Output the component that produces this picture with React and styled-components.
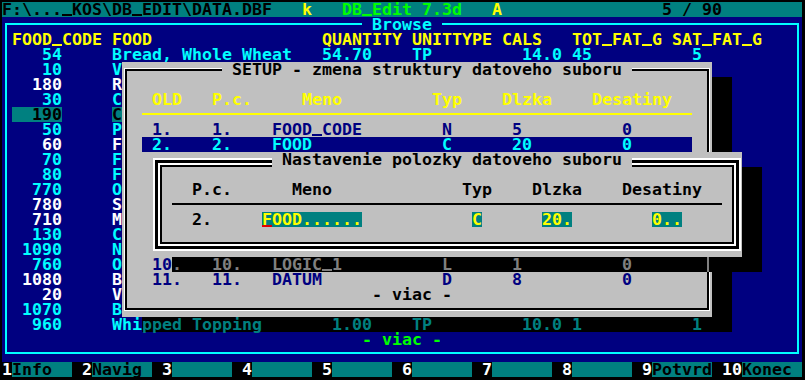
import React from 'react';
import styled, { createGlobalStyle } from 'styled-components';

// Windows console palette
const C = {
  black: '#000000',
  navy: '#000080',
  teal: '#008080',
  gray: '#c0c0c0',
  dim: '#808080',
  cyan: '#00ffff',
  yellow: '#ffff00',
  green: '#00ff00',
  white: '#ffffff',
};

const GlobalStyle = createGlobalStyle`
  html, body {
    margin: 0;
    padding: 0;
    background: #000;
  }
  body {
    width: 805px;
    height: 380px;
    overflow: hidden;
  }
`;

const Screen = styled.div`
  position: relative;
  width: 800px;
  height: 375px;
  margin: 2px 0 0 2px;
  font-family: "DejaVu Sans Mono", "Liberation Mono", monospace;
  font-weight: bold;
  font-size: 16.61px;
  line-height: 15px;
  color: ${C.gray};
`;

const Line = styled.div`
  position: relative;
  z-index: 1;
  display: flex;
  height: 15px;
  color: ${(p) => p.$fg || 'inherit'};
  background: ${(p) => p.$bg || 'transparent'};
`;

const Cell = styled.span`
  flex: none;
  width: ${(p) => p.$w * 10}px;
  height: 15px;
  white-space: pre;
  color: ${(p) => p.$fg || 'inherit'};
  background: ${(p) => p.$bg || 'transparent'};
  box-shadow: ${(p) => (p.$cursor ? 'inset 0 -2px 0 #e00000' : 'none')};
`;

// the font puts "_" below the 15px cell, so the bar is drawn at the cell bottom
const Under = styled.span`
  display: inline-block;
  width: 10px;
  height: 15px;
  vertical-align: top;
  -webkit-text-fill-color: transparent;
  background: linear-gradient(currentColor, currentColor) 0 12px / 100% 2px no-repeat;
`;

// horizontal single line drawn through the middle of the cells
const Rule = styled.span`
  flex: none;
  width: ${(p) => p.$w * 10}px;
  height: 15px;
  background: linear-gradient(${(p) => p.$color}, ${(p) => p.$color}) 0 6px / 100% 2px no-repeat;
`;

// frame line seen through a shadow
const Ghost = styled.span`
  flex: none;
  width: ${(p) => p.$w * 10}px;
  height: 15px;
  background: linear-gradient(${(p) => p.$color}, ${(p) => p.$color}) 5px 0 / 2px 100% no-repeat;
`;

const TopBar = styled(Line)`
  background: ${C.teal};
  color: ${C.black};
`;

const KeyBar = styled(Line)`
  background: ${C.black};
  color: ${C.white};
`;

const BrowseWindow = styled.div`
  position: relative;
  height: 345px;
  background: ${C.navy};
`;

const BrowseFrame = styled.div`
  position: absolute;
  top: 6px;
  left: 3px;
  right: 3px;
  bottom: 8px;
  border: 2px solid ${C.cyan};
`;

const Dialog = styled.div`
  position: absolute;
  z-index: ${(p) => p.$z};
  left: ${(p) => p.$col * 10}px;
  top: ${(p) => p.$row * 15}px;
  width: ${(p) => p.$cols * 10}px;
  height: ${(p) => p.$rows * 15}px;
  background: ${C.gray};
  color: ${C.black};
`;

const SingleFrame = styled.div`
  position: absolute;
  top: 7px;
  left: 3px;
  right: 3px;
  bottom: 7px;
  border: 2px solid ${C.black};
  box-shadow: 0 0 0 1px ${C.white};
`;

const DoubleFrame = styled.div`
  position: absolute;
  top: 6px;
  left: 1px;
  right: 1px;
  bottom: 6px;
  border: 2px solid ${C.white};
  box-shadow: inset 0 0 0 3px ${C.black}, inset 0 0 0 5px ${C.white}, inset 0 0 0 7px ${C.black};
`;

const Shadow = styled.div`
  position: absolute;
  z-index: ${(p) => p.$z};
  left: ${(p) => p.$col * 10}px;
  top: ${(p) => p.$row * 15}px;
  width: ${(p) => p.$cols * 10}px;
  height: ${(p) => p.$rows * 15}px;
  background: ${C.black};
`;

function renderText(text) {
  if (!text.includes('_')) return text;
  return text.split(/(_)/).map((part, i) => (part === '_' ? <Under key={i}>_</Under> : part));
}

// segs: [col, text | width, fg, bg, mod]
function segments(segs, width) {
  const parts = [];
  let pos = 0;
  segs.forEach((s, i) => {
    const [col, text, fg, bg, mod] = s;
    const w = typeof text === 'number' ? text : text.length;
    if (col > pos) parts.push(<Cell key={`g${i}`} $w={col - pos} />);
    if (mod === 'rule') parts.push(<Rule key={i} $w={w} $color={fg} />);
    else if (mod === 'ghost') parts.push(<Ghost key={i} $w={w} $color={fg} />);
    else
      parts.push(
        <Cell key={i} $w={w} $fg={fg} $bg={bg} $cursor={mod === 'cursor'}>
          {renderText(text)}
        </Cell>
      );
    pos = col + w;
  });
  if (pos < width) parts.push(<Cell key="tail" $w={width - pos} />);
  return parts;
}

function TextLine({ segs = [], width = 80, fg, bg }) {
  return (
    <Line $fg={fg} $bg={bg}>
      {segments(segs, width)}
    </Line>
  );
}

// builds a fixed width string with items at offsets
function place(width, items) {
  const arr = Array(width).fill(' ');
  items.forEach(([off, t]) => {
    for (let i = 0; i < t.length; i++) arr[off + i] = t[i];
  });
  return arr.join('');
}

// the part of each record left uncovered by the SETUP window;
// the rest of the last one shows through the shadow below
const records = [
  ['54', 'Bread, Whole Wheat', 'c', { q: '54.70', u: 'TP', cal: '14.0', tf: '45', sf: '5' }],
  ['10', 'V', 'c'],
  ['180', 'R', 'w'],
  ['30', 'C', 'c'],
  ['190', 'C', 'sel'],
  ['50', 'P', 'c'],
  ['60', 'F', 'w'],
  ['70', 'F', 'c'],
  ['80', 'F', 'c'],
  ['770', 'O', 'c'],
  ['780', 'S', 'w'],
  ['710', 'M', 'w'],
  ['130', 'C', 'c'],
  ['1090', 'N', 'c'],
  ['760', 'O', 'c'],
  ['1080', 'B', 'w'],
  ['20', 'V', 'w'],
  ['1070', 'B', 'c'],
  ['960', 'Whi', 'c'],
];

function recordSegs([code, food, kind, v]) {
  if (kind === 'sel') {
    return [
      [1, code.padStart(5, ' '), C.black, C.teal],
      [11, food, C.black, C.teal],
    ];
  }
  const fg = kind === 'w' ? C.white : C.cyan;
  const segs = [
    [6 - code.length, code, fg],
    [11, food, fg],
  ];
  if (v) {
    segs.push([37 - v.q.length, v.q, fg], [41, v.u, fg], [56 - v.cal.length, v.cal, fg], [57, v.tf, fg], [69, v.sf, fg]);
  }
  return segs;
}

const fkeys = ['Info', 'Navig', '', '', '', '', '', '', 'Potvrd', 'Konec'];

function keySegs() {
  const segs = [];
  fkeys.forEach((label, i) => {
    const n = String(i + 1);
    const col = i * 8;
    segs.push([col, n, C.white]);
    segs.push([col + n.length, label.padEnd(6, ' '), C.black, C.teal]);
  });
  return segs;
}

const Y = C.yellow;
const N = C.navy;

const setupRows = [
  [[10, ' SETUP - zmena struktury datoveho suboru ', C.black, C.gray]],
  [],
  [[3, 'OLD', Y], [9, 'P.c.', Y], [18, 'Meno', Y], [31, 'Typ', Y], [38, 'Dlzka', Y], [47, 'Desatiny', Y]],
  [[2, 55, Y, null, 'rule']],
  [[3, '1.', N], [9, '1.', N], [15, 'FOOD_CODE', N], [32, 'N', N], [39, '5', N], [50, '0', N]],
  [[2, place(55, [[1, '2.'], [7, '2.'], [13, 'FOOD'], [30, 'C'], [37, '20'], [48, '0']]), C.cyan, C.navy]],
  [], [], [], [], [], [], [],
  [[3, '10', N]],
  [[3, '11.', N], [9, '11.', N], [15, 'DATUM', N], [32, 'D', N], [39, '8', N], [50, '0', N]],
  [[25, '- viac -']],
  [],
];

const fieldRows = [
  [[12, ' Nastavenie polozky datoveho suboru ', C.black, C.gray]],
  [],
  [[4, 'P.c.'], [14, 'Meno'], [31, 'Typ'], [38, 'Dlzka'], [47, 'Desatiny']],
  [[2, 55, C.black, null, 'rule']],
  [
    [4, '2.'],
    [11, 'F', Y, C.teal, 'cursor'],
    [12, 'OOD......', Y, C.teal],
    [32, 'C', Y, C.teal],
    [39, '20.', Y, C.teal],
    [50, '0..', Y, C.teal],
  ],
  [],
  [],
];

export default function App() {
  return (
    <>
      <GlobalStyle />
      <Screen>
        <TopBar>
          {segments(
            [
              [0, 'F:\\..._KOS\\DB_EDIT\\DATA.DBF'],
              [30, 'k', C.yellow],
              [34, 'DB_Edit 7.3d', C.green],
              [49, 'A', C.yellow],
              [66, '5 / 90'],
            ],
            80
          )}
        </TopBar>

        <BrowseWindow>
          <BrowseFrame />
          <TextLine segs={[[36, ' Browse ', C.cyan, C.navy]]} />
          <TextLine
            fg={C.yellow}
            segs={[
              [1, 'FOOD_CODE'],
              [11, 'FOOD'],
              [32, 'QUANTITY'],
              [41, 'UNITTYPE'],
              [50, 'CALS'],
              [57, 'TOT_FAT_G'],
              [67, 'SAT_FAT_G'],
            ]}
          />
          {records.map((r) => (
            <TextLine key={r[0]} segs={recordSegs(r)} />
          ))}
          <TextLine segs={[[36, '- viac -', C.green]]} />
          <TextLine />
        </BrowseWindow>

        <KeyBar>{segments(keySegs(), 80)}</KeyBar>

        {/* SETUP window and its shadow */}
        <Shadow $z={2} $col={71} $row={5} $cols={2} $rows={16} />
        <Shadow $z={2} $col={14} $row={21} $cols={59} $rows={1}>
          <TextLine
            width={59}
            fg={C.teal}
            segs={[[0, 'pped Topping'], [19, '1.00'], [27, 'TP'], [38, '10.0'], [43, '1'], [55, '1']]}
          />
        </Shadow>
        <Dialog $z={3} $col={12} $row={4} $cols={59} $rows={17}>
          <SingleFrame />
          {setupRows.map((segs, i) => (
            <TextLine key={i} width={59} segs={segs} />
          ))}
        </Dialog>

        {/* field settings window and its shadow */}
        <Shadow $z={4} $col={74} $row={11} $cols={2} $rows={6} />
        <Shadow $z={4} $col={17} $row={17} $cols={59} $rows={1}>
          <TextLine
            width={59}
            fg={C.dim}
            segs={[
              [0, '.'],
              [4, '10.'],
              [10, 'LOGIC_1'],
              [27, 'L'],
              [34, '1'],
              [45, '0'],
              [53, 1, C.dim, null, 'ghost'],
            ]}
          />
        </Shadow>
        <Dialog $z={5} $col={15} $row={10} $cols={59} $rows={7}>
          <DoubleFrame />
          {fieldRows.map((segs, i) => (
            <TextLine key={i} width={59} segs={segs} />
          ))}
        </Dialog>
      </Screen>
    </>
  );
}
